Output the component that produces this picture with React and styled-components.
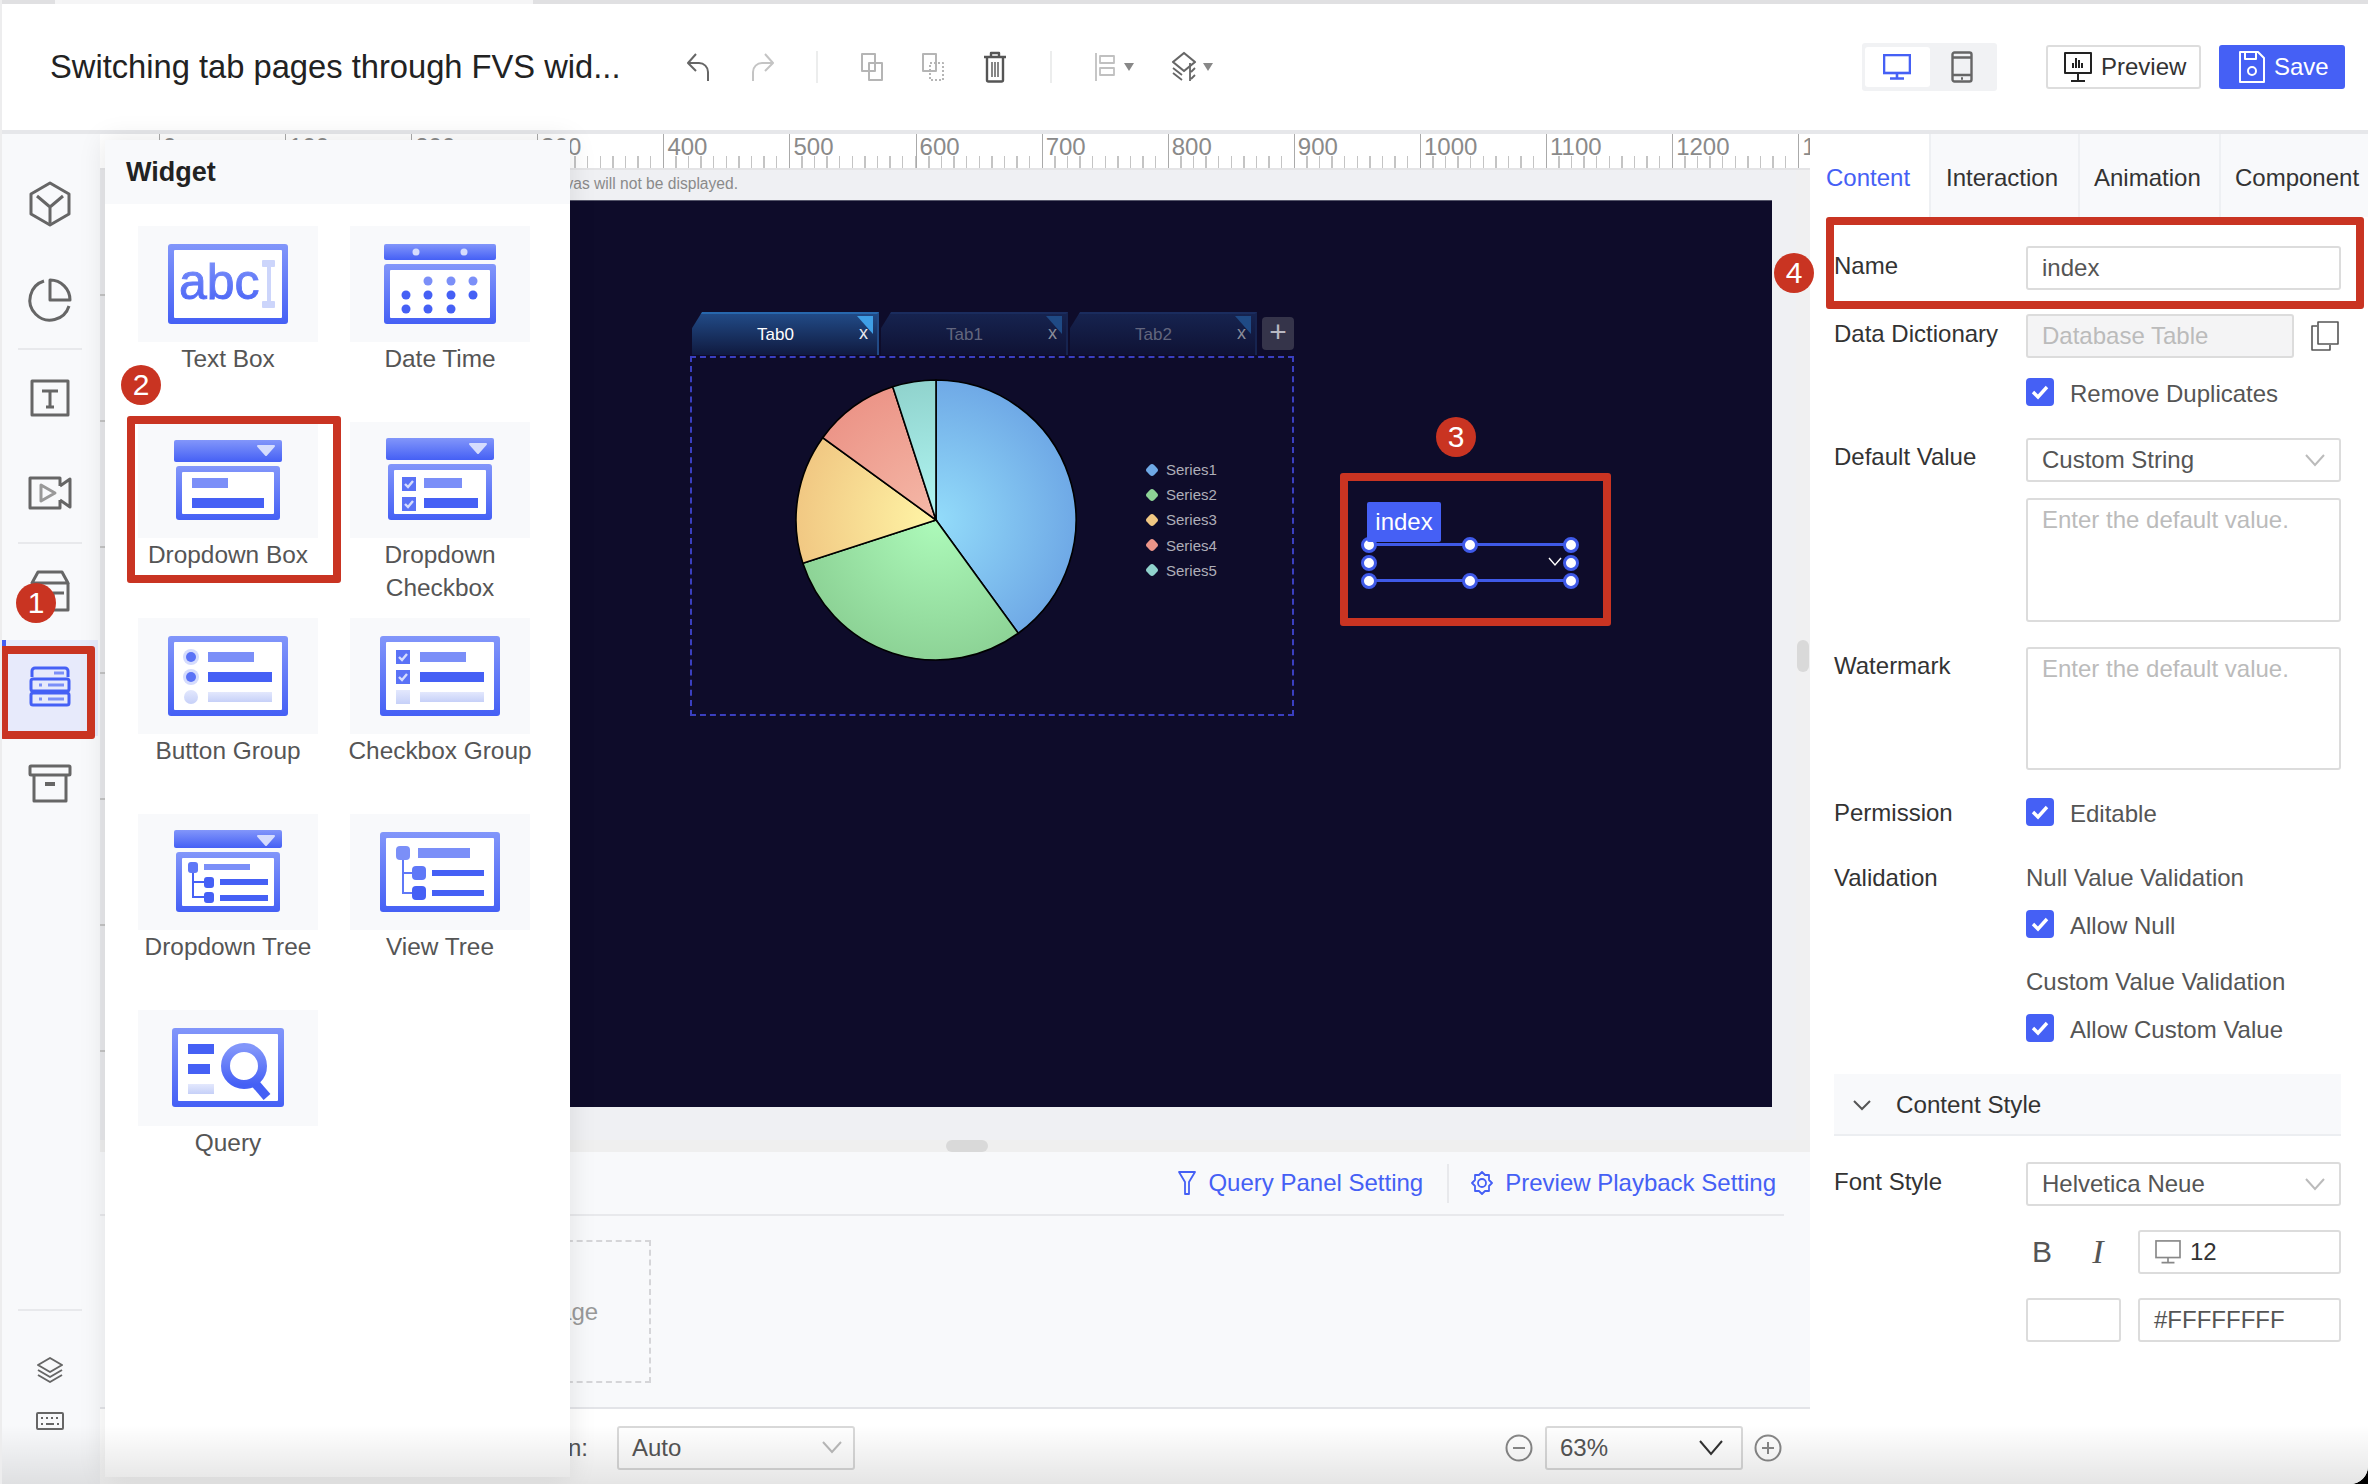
import React from "react";
import styled, { createGlobalStyle } from "styled-components";

const BLUE = "#4560f5";
const RED = "#c93422";

const Global = createGlobalStyle`
  html, body { margin: 0; padding: 0; background: #000; }
  * { box-sizing: border-box; }
  body { font-family: "Liberation Sans", Arial, sans-serif; }
`;

const Root = styled.div`
  position: relative;
  width: 2368px;
  height: 1484px;
  overflow: hidden;
  background: #fff;
  border-bottom-right-radius: 18px;
  display: flex;
  flex-direction: column;
  font-size: 24px;
  color: #555;
`;
const TopStrip = styled.div`
  height: 4px;
  flex: none;
  background: #e0e0e2;
  padding-left: 55px;
  &::before { content: ""; display: block; width: 478px; height: 4px; background: #f5f5f6; }
`;
const TopBar = styled.header`
  height: 130px;
  flex: none;
  display: flex;
  align-items: center;
  padding: 0 23px 0 50px;
  background: #fff;
  border-bottom: 4px solid #e6e7ea;
`;
const Title = styled.h1`
  margin: 0;
  width: 568px;
  font-size: 32.7px;
  font-weight: 400;
  color: #222;
  white-space: nowrap;
`;
const ToolBtn = styled.span`
  display: flex;
  align-items: center;
  justify-content: center;
  flex: none;
  height: 44px;
  width: ${p => p.$w || 36}px;
  margin-left: ${p => p.$ml || 0}px;
  gap: ${p => p.$gap || 0}px;
`;
const ToolDivider = styled.span`
  flex: none;
  width: 2px;
  height: 32px;
  background: #eceded;
  margin-left: ${p => p.$ml}px;
`;
const RightTools = styled.div`
  margin-left: auto;
  display: flex;
  align-items: center;
`;
const DeviceToggle = styled.div`
  width: 135px;
  height: 48px;
  background: #f1f2f4;
  border-radius: 3px;
  padding: 4px 3px;
  display: flex;
`;
const DeviceBtn = styled.span`
  width: 65px;
  display: flex;
  align-items: center;
  justify-content: center;
  background: ${p => (p.$on ? "#fff" : "transparent")};
  border-radius: 3px;
`;
const Preview = styled.button`
  margin-left: 49px;
  width: 155px;
  height: 44px;
  display: flex;
  align-items: center;
  gap: 9px;
  padding: 0 0 0 16px;
  font: 24px "Liberation Sans", sans-serif;
  color: #333;
  background: #fff;
  border: 2px solid #ddd;
  border-radius: 3px;
`;
const Save = styled(Preview)`
  margin-left: 18px;
  width: 126px;
  padding-left: 18px;
  gap: 9px;
  color: #fff;
  background: ${BLUE};
  border-color: ${BLUE};
`;
const Body = styled.div`
  position: relative;
  flex: 1;
  min-height: 0;
  display: flex;
`;
const Rail = styled.nav`
  width: 100px;
  flex: none;
  padding: 22px 2px 54px;
  display: flex;
  flex-direction: column;
  background: #f8f9fb;
`;
const RailItem = styled.span`
  position: relative;
  height: ${p => p.$h || 96}px;
  margin-top: ${p => p.$mt || 0}px;
  flex: none;
  display: flex;
  align-items: center;
  justify-content: center;
  background: ${p => (p.$on ? "#e7eafb" : "transparent")};
  ${p => p.$on && `&::before { content: ""; position: absolute; left: 0; top: 0; width: 4px; height: 96px; background: ${BLUE}; }`}
`;
const RailDivider = styled.hr`
  margin: ${p => p.$m || "0 16px"};
  border: 0;
  height: 2px;
  flex: none;
  background: #e8e9ec;
`;
const RailFill = styled.div`flex: 1;`;

const Editor = styled.main`
  width: 1710px;
  flex: none;
  display: flex;
  flex-direction: column;
  background: #eff0f3;
`;
const Ruler = styled.div`
  height: 36px;
  flex: none;
  display: flex;
  overflow: hidden;
  padding-left: 59px;
  background: #fff;
  border-bottom: 2px solid #e4e4e6;
`;
const RulerSeg = styled.span`
  flex: none;
  width: 126.1px;
  height: 34px;
  border-left: 1.5px solid #aaa;
  padding: 0 0 0 3px;
  font-size: 24px;
  line-height: 26px;
  color: #8a8a8a;
  background: repeating-linear-gradient(to right, transparent 0, transparent 11.1px, #c4c4c4 11.1px, #c4c4c4 12.6px) left bottom / 100% 12px no-repeat;
`;
const Stage = styled.div`
  height: 970px;
  flex: none;
  display: grid;
  grid-template-columns: 36px 1636px 38px;
`;
const VRuler = styled.div`
  background: #e8e9ec repeating-linear-gradient(to bottom, transparent 0, transparent 124px, #c4c4c4 124px, #c4c4c4 126px);
  width: 36px;
`;
const StageMain = styled.div`
  display: flex;
  flex-direction: column;
  margin-left: 4px;
  width: 1632px;
`;
const Hint = styled.div`
  height: 30px;
  flex: none;
  font-size: 15.6px;
  line-height: 27px;
  color: #8a8a8a;
  text-align: right;
  padding-right: 1034px;
  white-space: nowrap;
`;
const Canvas = styled.div`
  position: relative;
  height: 907px;
  flex: none;
  background: #0e0c2a;
  border-top: 1px solid #55566a;
`;
const Gutter = styled.div`
  margin-left: 24px;
  width: 14px;
  padding: 470px 0 0 1px;
  background: #f0f0f1;
`;
const ThumbV = styled.div`
  width: 12px;
  height: 32px;
  border-radius: 6px;
  background: #d9d9d9;
`;
const HTrack = styled.div`
  height: 12px;
  flex: none;
  background: #efefef;
  padding-left: 846px;
`;
const ThumbH = styled.div`
  width: 42px;
  height: 12px;
  border-radius: 6px;
  background: #d9d9d9;
`;
const BottomPanel = styled.section`
  height: 255px;
  flex: none;
  background: #f8f9fb;
  display: flex;
  flex-direction: column;
`;
const PanelHead = styled.div`
  height: 64px;
  flex: none;
  margin-right: 26px;
  padding: 0 8px 0 0;
  display: flex;
  align-items: center;
  justify-content: flex-end;
  border-bottom: 2px solid #e8e9ec;
  color: ${BLUE};
  white-space: nowrap;
`;
const HeadLink = styled.span`
  display: flex;
  align-items: center;
  gap: ${p => p.$gap}px;
`;
const HeadDivider = styled.span`
  width: 2px;
  height: 39px;
  margin: 0 22px 0 24px;
  background: #e8e9ec;
`;
const AddBox = styled.div`
  width: 211px;
  height: 143px;
  margin: 24px 0 0 340px;
  border: 2px dashed #d5d5d8;
  display: flex;
  align-items: center;
  justify-content: center;
  color: #999;
`;
const Footer = styled.footer`
  height: 77px;
  flex: 1;
  display: flex;
  align-items: center;
  padding: 2px 28px 0 0;
  background: #fff;
  border-top: 2px solid #e3e4e8;
`;
const FootLabel = styled.span`
  width: 488px;
  margin-right: 29px;
  text-align: right;
  color: #555;
`;
const FootSelect = styled.div`
  width: ${p => p.$w}px;
  height: 44px;
  margin: ${p => p.$m || 0};
  padding: 0 ${p => p.$pr}px 0 13px;
  display: flex;
  align-items: center;
  justify-content: space-between;
  border: 2px solid #d9d9d9;
  border-radius: 3px;
  color: #555;
`;
const ZoomGroup = styled.div`
  margin-left: auto;
  display: flex;
  align-items: center;
`;

const Side = styled.aside`
  flex: 1;
  min-width: 0;
  background: #fff;
  display: flex;
  flex-direction: column;
`;
const SideTabs = styled.div`
  height: 83px;
  flex: none;
  display: flex;
`;
const SideTab = styled.span`
  width: ${p => p.$w}px;
  flex: none;
  padding: 28px 0 0 ${p => p.$pl}px;
  line-height: 32px;
  white-space: nowrap;
  color: ${p => (p.$on ? BLUE : "#333")};
  background: ${p => (p.$on ? "#fff" : "#f8f9fb")};
  border-left: ${p => (p.$on ? "0" : "2px solid #eef0f3")};
`;
const Form = styled.div`
  padding: 29px 0 0 24px;
  display: flex;
  flex-direction: column;
`;
const FormRow = styled.div`
  display: grid;
  grid-template-columns: 192px 315px;
  margin-top: ${p => p.$gap || 0}px;
`;
const Label = styled.span`
  grid-column: 1;
  line-height: ${p => p.$lh || 40}px;
  padding-top: ${p => p.$pt || 0}px;
  color: #333;
  white-space: nowrap;
`;
const Cell = styled.div`
  grid-column: 2;
  display: flex;
  align-items: center;
  gap: ${p => p.$gap || 0}px;
  min-height: 28px;
`;
const Box = styled.div`
  flex: ${p => (p.$w ? "none" : 1)};
  width: ${p => (p.$w ? `${p.$w}px` : "auto")};
  height: ${p => p.$h || 44}px;
  padding: ${p => (p.$area ? "4px 14px 0" : "0 14px")};
  display: flex;
  align-items: ${p => (p.$area ? "flex-start" : "center")};
  justify-content: ${p => (p.$start ? "flex-start" : "space-between")};
  border: 2px solid #dcdcdc;
  border-radius: 3px;
  line-height: 32px;
  white-space: nowrap;
  background: ${p => (p.$off ? "#f4f4f5" : "#fff")};
  color: ${p => (p.$ph ? "#bbb" : "#555")};
`;
const CheckMark = styled.span`
  width: 28px;
  height: 28px;
  flex: none;
  background: ${BLUE};
  border-radius: 4px;
  display: flex;
  align-items: center;
  justify-content: center;
  margin-right: 16px;
`;
const CheckText = styled.span`
  line-height: 24px;
  padding-top: 3px;
  white-space: nowrap;
`;
const SubHead = styled.span`
  line-height: 26px;
  padding-top: 2px;
  white-space: nowrap;
  color: #555;
`;
const Collapse = styled.div`
  margin-top: 32px;
  width: 507px;
  height: 62px;
  display: flex;
  align-items: center;
  padding: 2px 0 0 19px;
  gap: 25px;
  font-size: 24.2px;
  color: #333;
  background: #f8f9fb;
  border-bottom: 2px solid #eceef1;
`;
const StyleGlyph = styled.span`
  width: ${p => p.$w}px;
  margin: ${p => p.$m || 0};
  flex: none;
  text-align: center;
  font-size: ${p => (p.$i ? 34 : 30)}px;
  font-style: ${p => (p.$i ? "italic" : "normal")};
  font-family: ${p => (p.$i ? '"Liberation Serif", serif' : '"Liberation Sans", sans-serif')};
  line-height: 30px;
  color: #555;
`;
const SizeText = styled.span`
  color: #333;
  margin-left: 8px;
`;

const WidgetPanel = styled.section`
  position: absolute;
  left: 105px;
  top: 6px;
  width: 465px;
  height: 1337px;
  background: #fff;
  box-shadow: 0 0 26px rgba(0, 0, 0, 0.1);
`;
const WidgetHead = styled.h2`
  margin: 0;
  height: 64px;
  padding-left: 21px;
  font-size: 27px;
  line-height: 64px;
  font-weight: 700;
  color: #222;
  background: #f8f9fb;
`;
const WidgetGrid = styled.div`
  padding: 22px 0 0 33px;
  display: grid;
  grid-template-columns: 180px 180px;
  grid-auto-rows: 196px;
  column-gap: 32px;
`;
const WidgetCell = styled.div`
  display: flex;
  flex-direction: column;
  align-items: center;
  text-align: center;
  white-space: nowrap;
  font-size: 24.4px;
  line-height: 33px;
  color: #555;
`;
const WidgetThumb = styled.div`
  width: 180px;
  height: 116px;
  flex: none;
  background: #f8f9fb;
`;

const Free = styled.div`
  position: absolute;
  display: flex;
  left: ${p => p.$x}px;
  top: ${p => p.$y}px;
  ${p => p.$w && `width: ${p.$w}px;`}
  ${p => p.$h && `height: ${p.$h}px;`}
`;
const TabRow = styled(Free)`
  gap: 2px;
`;
const CanvasTab = styled.div`
  position: relative;
  width: 187px;
  height: 43px;
  clip-path: polygon(0 100%, 0 38%, 10px 0, 100% 0, 100% 100%);
  background: linear-gradient(to bottom, ${p => (p.$on ? "#214a86, #101a3f" : "#16234f, #0f1234")});
  border-top: 2px solid ${p => (p.$on ? "#2767ad" : "#1a2c5e")};
  border-right: 2px solid ${p => (p.$on ? "#214a86" : "#16234f")};
  display: flex;
  align-items: center;
  font-size: 17px;
  color: ${p => (p.$on ? "#fff" : "#62667e")};
  padding: 0 0 0 65px;
  &::after {
    content: "";
    position: absolute;
    right: 4px;
    top: 2px;
    width: 16px;
    height: 18px;
    clip-path: polygon(0 0, 100% 0, 100% 100%);
    background: ${p => (p.$on ? "#3f9fe6" : "#1f4a85")};
  }
`;
const TabClose = styled.span`
  position: absolute;
  right: 9px;
  top: 9px;
  font-size: 18px;
  line-height: 20px;
  color: ${p => (p.$on ? "#e8e8f0" : "#8a8c99")};
`;
const TabAdd = styled.div`
  width: 32px;
  height: 33px;
  margin: 5px 0 0 3px;
  border-radius: 4px;
  background: #35344a;
  color: #b8b8c2;
  font-size: 30px;
  line-height: 30px;
  text-align: center;
`;
const DashBox = styled(Free)`
  border: 2px dashed #3a3fc0;
`;
const Legend = styled(Free)`
  flex-direction: column;
  font-size: 15px;
  color: #aeaeb8;
`;
const LegendItem = styled.div`
  height: 25.2px;
  display: flex;
  align-items: center;
  gap: 9px;
  &::before {
    content: "";
    width: 10px;
    height: 10px;
    border-radius: 3px;
    transform: rotate(45deg);
    background: ${p => p.$c};
  }
`;
const IndexTag = styled(Free)`
  z-index: 2;
  justify-content: center;
  width: 74px;
  height: 40px;
  border-radius: 2px;
  background: ${BLUE};
  color: #fff;
  line-height: 40px;
`;
const SelLine = styled(Free)`
  height: 3px;
  background: #3f5ae8;
`;
const Handle = styled(Free)`
  width: 16px;
  height: 16px;
  border-radius: 50%;
  background: #fff;
  border: 3px solid #3f5ae8;
`;
const Mark = styled.div`
  position: absolute;
  z-index: 5;
  left: ${p => p.$x}px;
  top: ${p => p.$y}px;
  width: ${p => p.$w}px;
  height: ${p => p.$h}px;
  border: 8px solid ${RED};
  border-radius: 3px;
`;
const Badge = styled.div`
  position: absolute;
  z-index: 6;
  left: ${p => p.$x - 20}px;
  top: ${p => p.$y - 20}px;
  width: 40px;
  height: 40px;
  border-radius: 50%;
  background: ${RED};
  color: #fff;
  font-size: 30px;
  line-height: 40px;
  text-align: center;
`;
const Vignette = styled.div`
  position: absolute;
  z-index: 7;
  left: 0;
  right: 0;
  top: 0;
  bottom: 0;
  pointer-events: none;
  box-shadow: inset 2px 0 0 #ededee;
  background: linear-gradient(to bottom, rgba(0,0,0,0) 1425px, rgba(0,0,0,0.1) 1484px);
`;
const DefsSvg = styled.svg`
  position: absolute;
  width: 0;
  height: 0;
`;

/* ---------- widget thumbnails ---------- */
const Frame = ({ x, y, w, h, b = 6 }) => (
  <>
    <rect x={x} y={y} width={w} height={h} rx="3" fill="url(#wg)" />
    <rect x={x + b} y={y + b} width={w - 2 * b} height={h - 2 * b} rx="1" fill="#fff" />
  </>
);
const Bar = ({ x, y, w, h = 10, t = "d" }) => (
  <rect x={x} y={y} width={w} height={h}
    fill={t === "l" ? "#7b8ff8" : t === "f" ? "url(#wf)" : BLUE} />
);
const DropBar = ({ y, h = 22 }) => (
  <>
    <rect x="36" y={y} width="108" height={h} rx="2" fill="url(#wg)" />
    <path d={`M120 ${y + 6}h16l-8 9z`} fill="#d5dcfd" stroke="#d5dcfd" strokeWidth="2" strokeLinejoin="round" />
  </>
);
const MiniCheck = ({ x, y, off }) => (
  <>
    <rect x={x} y={y} width="14" height="14" fill={off ? "url(#wf)" : "#5a72f6"} />
    {!off && <path d={`M${x + 3} ${y + 7}l3 3l5-6`} fill="none" stroke="#d5dcfd" strokeWidth="2.4" />}
  </>
);
const Thumb = ({ children }) => (
  <WidgetThumb>
    <svg width="180" height="116" viewBox="0 0 180 116">{children}</svg>
  </WidgetThumb>
);
const widgets = [
  {
    name: "Text Box",
    art: (
      <>
        <Frame x={30} y={18} w={120} h={80} />
        <text x="41" y="73" fontSize="50" fontFamily="Liberation Sans" fill="url(#wg)" stroke="url(#wg)" strokeWidth="0.9">abc</text>
        <rect x="129" y="40" width="4" height="36" fill="#ccd5fb" />
        <rect x="124" y="34" width="13" height="7" rx="1" fill="#ccd5fb" />
        <rect x="124" y="75" width="13" height="7" rx="1" fill="#ccd5fb" />
      </>
    ),
  },
  {
    name: "Date Time",
    art: (
      <>
        <rect x="34" y="18" width="112" height="16" rx="2" fill="url(#wg)" />
        <circle cx="66" cy="26" r="3.5" fill="#d5dcfd" />
        <circle cx="114" cy="26" r="3.5" fill="#d5dcfd" />
        <Frame x={34} y={38} w={112} h={60} />
        {[[78, 55], [101, 55], [123, 55], [56, 69], [78, 69], [101, 69], [123, 69], [56, 83], [78, 83], [101, 83]].map(([cx, cy]) => (
          <circle key={`${cx}-${cy}`} cx={cx} cy={cy} r="4.5" fill={cy === 55 ? "#7b8ff8" : BLUE} />
        ))}
      </>
    ),
  },
  {
    name: "Dropdown Box",
    art: (
      <>
        <DropBar y={18} />
        <Frame x={38} y={44} w={104} h={54} />
        <Bar x={54} y={56} w={36} t="l" />
        <Bar x={54} y={76} w={72} />
      </>
    ),
  },
  {
    name: <>Dropdown<br />Checkbox</>,
    art: (
      <>
        <DropBar y={16} />
        <Frame x={38} y={42} w={104} h={56} />
        <MiniCheck x={52} y={55} />
        <MiniCheck x={52} y={75} />
        <Bar x={74} y={56} w={38} t="l" />
        <Bar x={74} y={76} w={54} />
      </>
    ),
  },
  {
    name: "Button Group",
    art: (
      <>
        <Frame x={30} y={18} w={120} h={80} />
        <circle cx="53" cy="39" r="8" fill="#d5dcfd" />
        <circle cx="53" cy="39" r="5" fill="#5a72f6" />
        <circle cx="53" cy="59" r="8" fill="#d5dcfd" />
        <circle cx="53" cy="59" r="5" fill="#5a72f6" />
        <circle cx="53" cy="79" r="7" fill="url(#wf)" />
        <Bar x={70} y={34} w={46} t="l" />
        <Bar x={70} y={54} w={64} />
        <Bar x={70} y={74} w={64} t="f" />
      </>
    ),
  },
  {
    name: "Checkbox Group",
    art: (
      <>
        <Frame x={30} y={18} w={120} h={80} />
        <MiniCheck x={46} y={32} />
        <MiniCheck x={46} y={52} />
        <MiniCheck x={46} y={72} off />
        <Bar x={70} y={34} w={46} t="l" />
        <Bar x={70} y={54} w={64} />
        <Bar x={70} y={74} w={64} t="f" />
      </>
    ),
  },
  {
    name: "Dropdown Tree",
    art: (
      <>
        <DropBar y={16} h={18} />
        <Frame x={38} y={38} w={104} h={60} />
        <path d="M55 56V83H68M55 68H68" fill="none" stroke={BLUE} strokeWidth="2" />
        <rect x="50" y="48" width="10" height="11" rx="3" fill="#5f78f7" />
        <rect x="66" y="63" width="10" height="11" rx="3" fill={BLUE} />
        <rect x="66" y="78" width="10" height="11" rx="3" fill={BLUE} />
        <Bar x={66} y={50} w={46} h={6} t="l" />
        <Bar x={82} y={65} w={48} h={6} />
        <Bar x={82} y={81} w={48} h={6} />
      </>
    ),
  },
  {
    name: "View Tree",
    art: (
      <>
        <Frame x={30} y={18} w={120} h={80} />
        <path d="M53 44V79H64M53 59H64" fill="none" stroke="#5f78f7" strokeWidth="2" />
        <rect x="46" y="32" width="14" height="14" rx="4" fill="#7b8ff8" />
        <rect x="62" y="52" width="14" height="14" rx="4" fill="#5f78f7" />
        <rect x="62" y="72" width="14" height="14" rx="4" fill={BLUE} />
        <Bar x={68} y={34} w={52} t="l" />
        <Bar x={82} y={56} w={52} h={6} />
        <Bar x={82} y={76} w={52} h={6} />
      </>
    ),
  },
  {
    name: "Query",
    art: (
      <>
        <Frame x={34} y={18} w={112} h={79} />
        <Bar x={50} y={34} w={26} />
        <Bar x={50} y={54} w={22} />
        <Bar x={50} y={74} w={26} t="f" />
        <path d="M116 72L129 87" stroke={BLUE} strokeWidth="9" />
        <circle cx="106" cy="56" r="18.5" fill="#fff" stroke="url(#wg)" strokeWidth="9" />
      </>
    ),
  },
];

/* ---------- icons ---------- */
const Ic = ({ w = 48, h = 48, vb, c = "#666", sw = 3, children }) => (
  <svg width={w} height={h} viewBox={vb || `0 0 ${w} ${h}`} fill="none" stroke={c} strokeWidth={sw} strokeLinejoin="round">
    {children}
  </svg>
);
const Chevron = ({ c = "#bbb", w = 20, h = 11, sw = 2 }) => (
  <svg width={w} height={h + 2} viewBox={`0 0 ${w} ${h + 2}`} fill="none" stroke={c} strokeWidth={sw}>
    <path d={`M1 1L${w / 2} ${h}L${w - 1} 1`} />
  </svg>
);
const Caret = () => (
  <svg width="10" height="8" viewBox="0 0 10 8"><path d="M0 0h10L5 8z" fill="#888" /></svg>
);
const Tick = () => (
  <svg width="18" height="16" viewBox="0 0 18 16" fill="none" stroke="#fff" strokeWidth="3.4">
    <path d="M2 8l5 5l9-10" />
  </svg>
);
const Monitor = ({ c, w = 28, h = 26, sw = 2 }) => (
  <svg width={w} height={h} viewBox="0 0 28 26" fill="none" stroke={c} strokeWidth={sw}>
    <rect x="1" y="1" width="26" height="18" />
    <path d="M14 19v5M7 24.5h14" />
  </svg>
);
const Circ = ({ plus }) => (
  <svg width="28" height="28" viewBox="0 0 28 28" fill="none" stroke="#888" strokeWidth="2">
    <circle cx="14" cy="14" r="12.5" />
    <path d={plus ? "M8 14h12M14 8v12" : "M8 14h12"} />
  </svg>
);

const rail = [
  <Ic key="a"><path d="M24 3L43 14V34L24 45L5 34V14Z" /><path d="M11 16L24 27L37 16M24 27V43" /></Ic>,
  <Ic key="b"><path d="M18 5A20 20 0 1 0 43 30" /><path d="M24 4V24H44A20 20 0 0 0 24 4Z" /></Ic>,
  <Ic key="c"><rect x="6" y="7" width="36" height="34" /><path d="M16 17H32M24 17V33M20 33H28" /></Ic>,
  <Ic key="d"><path d="M34 16V8H4V38H34V30M34 16L44 9V37L34 30" /><path d="M15 15L29 23L15 31Z" stroke="#999" /></Ic>,
  <Ic key="e"><path d="M12 4H36L42 15H6Z" /><path d="M42 15V42H8V15M27 42V25H38" /></Ic>,
  <Ic key="f" c={BLUE}><path d="M6 13V7a3 3 0 0 1 3-3H39a3 3 0 0 1 3 3V13" /><path d="M28 9H38" stroke="#7b8ff8" /><rect x="5" y="15" width="38" height="12" rx="2" /><rect x="5" y="29" width="38" height="12" rx="2" /><path d="M13 21h3M22 21H38M13 35h3M22 35H38" stroke="#7b8ff8" /></Ic>,
  <Ic key="g"><rect x="4" y="6" width="40" height="9" rx="1" /><path d="M8 15V41H40V15" /><path d="M19 24H29" strokeWidth="4" /></Ic>,
];

const rulerMarks = Array.from({ length: 14 }, (_, i) => i * 100);

const slices = [
  { v: 40, a: "#93dcfa", b: "#6fa9e6" },
  { v: 30, a: "#adfaba", b: "#8dd396" },
  { v: 15, a: "#fff5a6", b: "#f1c883" },
  { v: 10, a: "#f5b9a8", b: "#ec9588" },
  { v: 5, a: "#b2f7f4", b: "#90d3cd" },
];
const pt = (deg) => {
  const r = (deg * Math.PI) / 180;
  return `${142 + 140 * Math.sin(r)} ${142 - 140 * Math.cos(r)}`;
};
const Pie = () => {
  let acc = 0;
  return (
    <svg width="284" height="284" viewBox="0 0 284 284">
      <defs>
        {slices.map((s, i) => (
          <radialGradient key={i} id={`pie${i}`} gradientUnits="userSpaceOnUse" cx="142" cy="142" r="140">
            <stop offset="0" stopColor={s.a} />
            <stop offset="1" stopColor={s.b} />
          </radialGradient>
        ))}
      </defs>
      {slices.map((s, i) => {
        const from = acc * 3.6;
        acc += s.v;
        const to = acc * 3.6;
        return (
          <path key={i} d={`M142 142L${pt(from)}A140 140 0 ${s.v > 50 ? 1 : 0} 1 ${pt(to)}Z`}
            fill={`url(#pie${i})`} stroke="#000" strokeWidth="1.6" />
        );
      })}
    </svg>
  );
};

const handles = [[1229, 344], [1330, 344], [1431, 344], [1229, 362], [1431, 362], [1229, 380], [1330, 380], [1431, 380]];

export default function App() {
  return (
    <Root>
      <Global />
      <DefsSvg aria-hidden="true">
        <defs>
          <linearGradient id="wg" x1="0" y1="0" x2="0" y2="1">
            <stop offset="0" stopColor="#8296fa" />
            <stop offset="1" stopColor="#4560f5" />
          </linearGradient>
          <linearGradient id="wf" x1="0" y1="0" x2="0" y2="1">
            <stop offset="0" stopColor="#e3e8fd" />
            <stop offset="1" stopColor="#c6d0f8" />
          </linearGradient>
        </defs>
      </DefsSvg>
      <TopStrip />
      <TopBar>
        <Title>Switching tab pages through FVS wid...</Title>
        <ToolBtn $ml={62}>
          <Ic w={26} h={34} c="#666" sw={2}><path d="M11 4L3 13L11 21M3 13H14a9 9 0 0 1 9 9V31" /></Ic>
        </ToolBtn>
        <ToolBtn $ml={29}>
          <Ic w={26} h={34} c="#c4c4c4" sw={2}><path d="M15 4L23 13L15 21M23 13H12a9 9 0 0 0-9 9V31" /></Ic>
        </ToolBtn>
        <ToolDivider $ml={35} />
        <ToolBtn $ml={36}>
          <Ic w={24} h={30} c="#b5b5b5" sw={2}><rect x="2" y="2" width="13" height="17" /><rect x="9" y="11" width="13" height="17" /></Ic>
        </ToolBtn>
        <ToolBtn $ml={25}>
          <Ic w={24} h={30} c="#b5b5b5" sw={2}><rect x="2" y="2" width="13" height="17" /><rect x="9" y="11" width="13" height="17" strokeDasharray="2 2" /></Ic>
        </ToolBtn>
        <ToolBtn $ml={26}>
          <Ic w={24} h={32} c="#555" sw={2.4}><path d="M1 6H23M8 6V2H16V6M4 6V29a1.5 1.5 0 0 0 1.5 1.5H18.5a1.5 1.5 0 0 0 1.5-1.5V6" /><path d="M9 11V26M12 11V26M15 11V26" strokeWidth="1.4" /></Ic>
        </ToolBtn>
        <ToolDivider $ml={37} />
        <ToolBtn $ml={36} $w={52} $gap={7}>
          <Ic w={22} h={32} c="#c0c0c0" sw={1.8}><path d="M1 2V30" /><rect x="5" y="5" width="14" height="7" /><rect x="5" y="17" width="14" height="7" /></Ic>
          <Caret />
        </ToolBtn>
        <ToolBtn $ml={27} $w={48} $gap={4}>
          <Ic w={30} h={32} c="#666" sw={2.2}><path d="M15 2L26 11L15 20L4 11Z" /><path d="M4 17L13 24M4 22L13 29M26 17L22 21M26 24L22 28M21 12V30" strokeWidth="1.8" /></Ic>
          <Caret />
        </ToolBtn>
        <RightTools>
          <DeviceToggle>
            <DeviceBtn $on><Monitor c={BLUE} sw={2.6} /></DeviceBtn>
            <DeviceBtn>
              <Ic w={22} h={32} c="#666" sw={2.4}><rect x="1.5" y="1.5" width="19" height="29" rx="2" /><path d="M1.5 6.5H20.5M1.5 24H20.5M10 27.5H12" /></Ic>
            </DeviceBtn>
          </DeviceToggle>
          <Preview>
            <Ic w={28} h={30} c="#222" sw={2}><rect x="1" y="1" width="26" height="20" /><path d="M14 21V29M7 29H21M9 16V11M12 16V6M15 16V8M18 16V11" /></Ic>
            Preview
          </Preview>
          <Save>
            <Ic w={26} h={32} c="#fff" sw={2}><path d="M1 1H19L25 7V31H1Z" /><path d="M6 1V8H17V1" /><circle cx="13" cy="20" r="4" /></Ic>
            Save
          </Save>
        </RightTools>
      </TopBar>
      <Body>
        <Rail>
          <RailItem>{rail[0]}</RailItem>
          <RailItem>{rail[1]}</RailItem>
          <RailDivider />
          <RailItem>{rail[2]}</RailItem>
          <RailItem>{rail[3]}</RailItem>
          <RailDivider />
          <RailItem>{rail[4]}</RailItem>
          <RailItem $on>{rail[5]}</RailItem>
          <RailItem>{rail[6]}</RailItem>
          <RailFill />
          <RailDivider $m="0 16px 46px" />
          <RailItem $h={26}>
            <Ic w={26} h={26} c="#666" sw={2}><path d="M13 1L25 8L13 15L1 8Z" /><path d="M1 13L13 20L25 13M1 18L13 25L25 18" /></Ic>
          </RailItem>
          <RailItem $h={18} $mt={29}>
            <Ic w={28} h={18} c="#666" sw={2}><rect x="1" y="1" width="26" height="16" rx="1" /><path d="M5 6h2M10 6h2M15 6h2M20 6h2M5 12h2M10 12h8M21 12h2" /></Ic>
          </RailItem>
        </Rail>
        <Editor>
          <Ruler>
            {rulerMarks.map(m => <RulerSeg key={m}>{m}</RulerSeg>)}
          </Ruler>
          <Stage>
            <VRuler />
            <StageMain>
              <Hint>Content beyond the canvas will not be displayed.</Hint>
              <Canvas>
                <TabRow $x={552} $y={111}>
                  <CanvasTab $on>Tab0<TabClose $on>x</TabClose></CanvasTab>
                  <CanvasTab>Tab1<TabClose>x</TabClose></CanvasTab>
                  <CanvasTab>Tab2<TabClose>x</TabClose></CanvasTab>
                  <TabAdd>+</TabAdd>
                </TabRow>
                <DashBox $x={550} $y={155} $w={604} $h={360} />
                <Free $x={654} $y={177}><Pie /></Free>
                <Legend $x={1007} $y={256}>
                  {["Series1", "Series2", "Series3", "Series4", "Series5"].map((s, i) => (
                    <LegendItem key={s} $c={slices[i].b}>{s}</LegendItem>
                  ))}
                </Legend>
                <IndexTag $x={1227} $y={301}>index</IndexTag>
                <SelLine $x={1229} $y={342} $w={202} />
                <SelLine $x={1229} $y={378} $w={202} />
                {handles.map(([x, y]) => <Handle key={`${x}-${y}`} $x={x - 8} $y={y - 8} />)}
                <Free $x={1408} $y={356}><Chevron c="#fff" w={14} h={8} sw={1.4} /></Free>
              </Canvas>
            </StageMain>
            <Gutter><ThumbV /></Gutter>
          </Stage>
          <HTrack><ThumbH /></HTrack>
          <BottomPanel>
            <PanelHead>
              <HeadLink $gap={11}>
                <Ic w={20} h={26} c={BLUE} sw={1.8}><path d="M2 2H18L12 12V24H8V12Z" /></Ic>
                Query Panel Setting
              </HeadLink>
              <HeadDivider />
              <HeadLink $gap={12}>
                <Ic w={22} h={24} c={BLUE} sw={1.8}><path d="M11 1l3 3h4v5l3 3l-3 3v5h-4l-3 3l-3-3H4v-5l-3-3l3-3V4h4z" /><circle cx="11" cy="12" r="4" /></Ic>
                Preview Playback Setting
              </HeadLink>
            </PanelHead>
            <AddBox>Add Page</AddBox>
          </BottomPanel>
          <Footer>
            <FootLabel>Adaptation:</FootLabel>
            <FootSelect $w={238} $pr={11}>Auto<Chevron c="#bbb" /></FootSelect>
            <ZoomGroup>
              <Circ />
              <FootSelect $w={198} $m="0 11px 0 12px" $pr={18}>63%<Chevron c="#333" w={24} h={14} /></FootSelect>
              <Circ plus />
            </ZoomGroup>
          </Footer>
        </Editor>
        <Side>
          <SideTabs>
            <SideTab $on $w={119} $pl={16}>Content</SideTab>
            <SideTab $w={149} $pl={15}>Interaction</SideTab>
            <SideTab $w={141} $pl={14}>Animation</SideTab>
            <SideTab $w={149} $pl={14}>Component</SideTab>
          </SideTabs>
          <Form>
            <FormRow>
              <Label>Name</Label>
              <Cell><Box>index</Box></Cell>
            </FormRow>
            <FormRow $gap={24}>
              <Label>Data Dictionary</Label>
              <Cell $gap={17}>
                <Box $w={268} $off $ph>Database Table</Box>
                <Ic w={28} h={30} c="#555" sw={1.6}><path d="M6 5H1V29H19V24" /><rect x="7" y="1" width="20" height="22" /></Ic>
              </Cell>
            </FormRow>
            <FormRow $gap={20}>
              <Cell><CheckMark><Tick /></CheckMark><CheckText>Remove Duplicates</CheckText></Cell>
            </FormRow>
            <FormRow $gap={32}>
              <Label $lh={38}>Default Value</Label>
              <Cell><Box>Custom String<Chevron /></Box></Cell>
            </FormRow>
            <FormRow $gap={16}>
              <Cell><Box $area $ph $h={124}>Enter the default value.</Box></Cell>
            </FormRow>
            <FormRow $gap={25}>
              <Label $lh={38}>Watermark</Label>
              <Cell><Box $area $ph $h={123}>Enter the default value.</Box></Cell>
            </FormRow>
            <FormRow $gap={28}>
              <Label $lh={26} $pt={2}>Permission</Label>
              <Cell><CheckMark><Tick /></CheckMark><CheckText>Editable</CheckText></Cell>
            </FormRow>
            <FormRow $gap={37}>
              <Label $lh={26} $pt={2}>Validation</Label>
              <Cell><SubHead>Null Value Validation</SubHead></Cell>
            </FormRow>
            <FormRow $gap={19}>
              <Cell><CheckMark><Tick /></CheckMark><CheckText>Allow Null</CheckText></Cell>
            </FormRow>
            <FormRow $gap={29}>
              <Cell><SubHead>Custom Value Validation</SubHead></Cell>
            </FormRow>
            <FormRow $gap={19}>
              <Cell><CheckMark><Tick /></CheckMark><CheckText>Allow Custom Value</CheckText></Cell>
            </FormRow>
            <Collapse><Chevron c="#555" w={18} h={9} />Content Style</Collapse>
            <FormRow $gap={26}>
              <Label $lh={40}>Font Style</Label>
              <Cell><Box>Helvetica Neue<Chevron /></Box></Cell>
            </FormRow>
            <FormRow $gap={24}>
              <Cell>
                <StyleGlyph $w={32}>B</StyleGlyph>
                <StyleGlyph $w={32} $i $m="0 24px">I</StyleGlyph>
                <Box $w={203} $start>
                  <Monitor c="#888" w={28} h={24} sw={1.8} />
                  <SizeText>12</SizeText>
                </Box>
              </Cell>
            </FormRow>
            <FormRow $gap={24}>
              <Cell $gap={17}>
                <Box $w={95} />
                <Box $w={203}>#FFFFFFFF</Box>
              </Cell>
            </FormRow>
          </Form>
        </Side>
        <WidgetPanel>
          <WidgetHead>Widget</WidgetHead>
          <WidgetGrid>
            {widgets.map((w, i) => (
              <WidgetCell key={i}>
                <Thumb>{w.art}</Thumb>
                {w.name}
              </WidgetCell>
            ))}
          </WidgetGrid>
        </WidgetPanel>
      </Body>

      <Mark $x={0} $y={646} $w={95} $h={93} />
      <Mark $x={127} $y={416} $w={214} $h={167} />
      <Mark $x={1340} $y={473} $w={271} $h={153} />
      <Mark $x={1826} $y={217} $w={538} $h={92} />
      <Badge $x={36} $y={603}>1</Badge>
      <Badge $x={141} $y={385}>2</Badge>
      <Badge $x={1456} $y={437}>3</Badge>
      <Badge $x={1794} $y={273}>4</Badge>
      <Vignette />
    </Root>
  );
}
